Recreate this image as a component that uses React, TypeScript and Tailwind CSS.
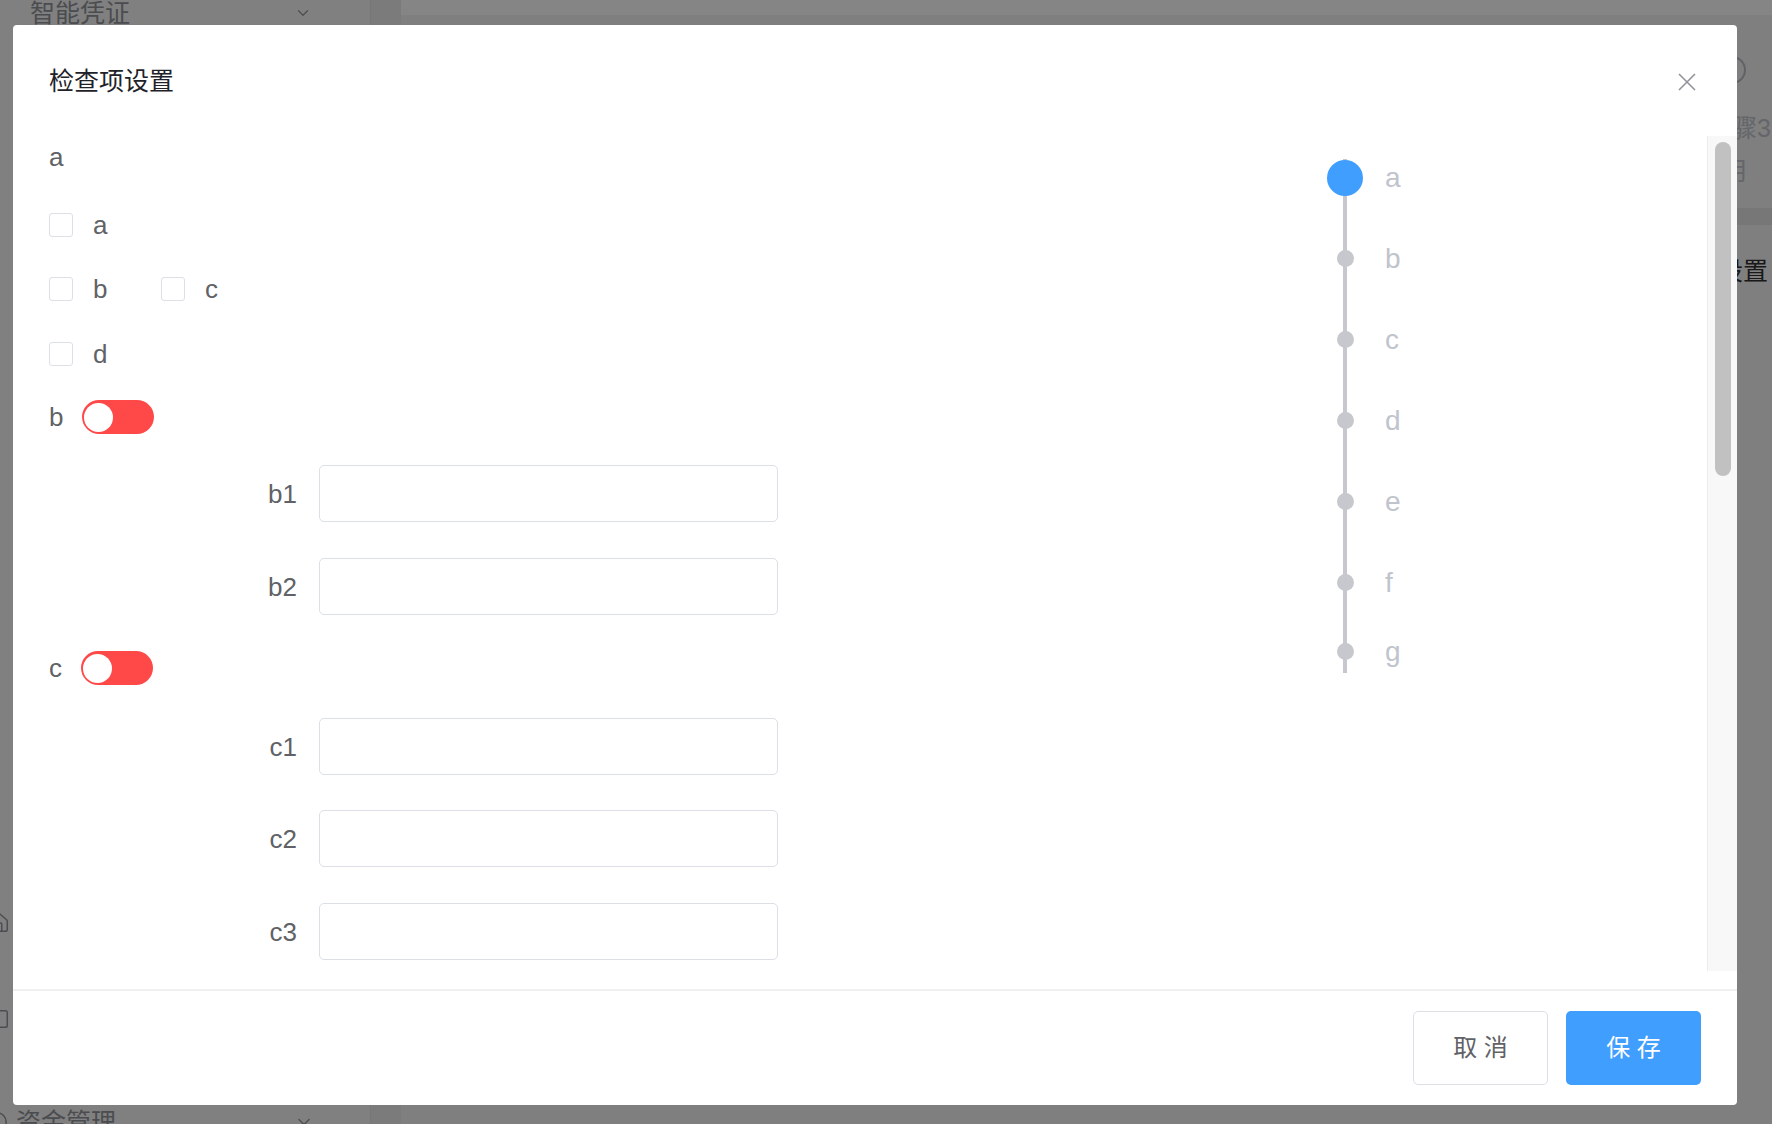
import { ChevronDown, Home, Square, Circle } from 'lucide-react';

const steps = ['a', 'b', 'c', 'd', 'e', 'f', 'g'];

function Check({ label, className = '' }: { label: string; className?: string }) {
    return (
        <label className={`flex items-center ${className}`}>
            <span className="h-[24px] w-[24px] rounded-[3px] border border-[#dcdfe6] bg-white" />
            <span className="ml-[20px] text-[26px] leading-none text-[#606266]">{label}</span>
        </label>
    );
}

function Toggle({ label, className = '' }: { label: string; className?: string }) {
    return (
        <div className={`flex h-[40px] shrink-0 items-center gap-[19px] ${className}`}>
            <span className="text-[26px] leading-none text-[#606266]">{label}</span>
            <span className="flex h-[34px] w-[72px] items-center rounded-full bg-[#ff4949] px-[2px]">
                <span className="h-[29px] w-[29px] rounded-full bg-white" />
            </span>
        </div>
    );
}

function Field({ label, className = '' }: { label: string; className?: string }) {
    return (
        <div className={`flex shrink-0 items-center ${className}`}>
            <span className="w-[270px] pr-[22px] text-right text-[26px] leading-none text-[#606266]">{label}</span>
            <input className="h-[57px] w-[459px] rounded-[5px] border border-[#dcdfe6] bg-white px-[15px] outline-none" />
        </div>
    );
}

export default function App() {
    return (
        <div className="relative h-[1124px] w-[1772px] overflow-hidden bg-[#f4f4f4] [font-family:'Liberation_Sans','Noto_Sans_CJK_SC',sans-serif]">
            {/* page behind the dialog */}
            <div className="flex h-full">
                <aside className="flex w-[371px] flex-col border-r border-[#e4e4e4] bg-[#f6f6f6] text-[#909399]">
                    <div className="-mt-[12px] flex h-[50px] shrink-0 items-center justify-between pl-[30px] pr-[58px]">
                        <span className="text-[25px] leading-none">智能凭证</span>
                        <ChevronDown size={18} strokeWidth={1.6} />
                    </div>
                    <div className="mt-[860px] flex h-[50px] shrink-0 items-center -ml-[12px]">
                        <Home size={22} strokeWidth={1.6} />
                    </div>
                    <div className="mt-[46px] flex h-[50px] shrink-0 items-center -ml-[12px]">
                        <Square size={22} strokeWidth={1.6} />
                    </div>
                    <div className="mt-[53px] flex h-[50px] shrink-0 items-center justify-between pr-[56px]">
                        <div className="flex items-center gap-[8px] -ml-[14px]">
                            <Circle size={22} strokeWidth={1.6} />
                            <span className="text-[25px] leading-none">资金管理</span>
                        </div>
                        <ChevronDown size={20} strokeWidth={1.6} />
                    </div>
                </aside>
                <div className="w-[30px] bg-[#ececec]" />
                <main className="flex flex-1 flex-col">
                    <div className="h-[15px] shrink-0 bg-white" />
                    <div className="flex flex-1 flex-col items-end bg-[#f3f3f3]">
                        <span className="mr-[26px] mt-[41px] h-[28px] w-[28px] shrink-0 rounded-full border-2 border-[#b8bcc4]" />
                        <span className="mr-[1px] mt-[31px] text-[25px] leading-[26px] text-[#c0c4cc]">步骤3</span>
                        <span className="mr-[26px] mt-[17px] text-[25px] leading-[26px] text-[#c0c4cc]">步骤说明</span>
                        <div className="mt-[24px] h-[17px] w-full shrink-0 bg-[#e4e4e4]" />
                        <span className="mr-[4px] mt-[33px] text-[25px] leading-[26px] text-[#303133]">检查项设置</span>
                    </div>
                </main>
            </div>

            <div className="absolute inset-0 bg-black/[0.48]" />

            {/* dialog */}
            <div className="absolute left-[13px] top-[25px] flex h-[1080px] w-[1724px] flex-col overflow-hidden rounded-[4px] bg-white">
                <div className="flex h-[111px] shrink-0 items-start justify-between pl-[36px] pr-[41px] pt-[40px]">
                    <h2 className="text-[25px] leading-[32px] text-[#1f2329]">检查项设置</h2>
                    <button className="flex h-[34px] items-center">
                        <svg width="18" height="18" viewBox="0 0 18 18" fill="none" stroke="#909399" strokeWidth="1.6">
                            <path d="M1 1L17 17M17 1L1 17" />
                        </svg>
                    </button>
                </div>

                <div className="flex h-[835px] shrink-0">
                    <div className="flex flex-1 flex-col overflow-hidden pl-[36px] pt-[1px]">
                        <div className="flex h-[40px] shrink-0 items-center text-[26px] leading-none text-[#606266]">a</div>
                        <div className="mt-[28px] flex h-[40px] shrink-0 items-center">
                            <Check label="a" />
                        </div>
                        <div className="mt-[24px] flex h-[40px] shrink-0 items-center">
                            <Check label="b" className="w-[112px]" />
                            <Check label="c" />
                        </div>
                        <div className="mt-[25px] flex h-[40px] shrink-0 items-center">
                            <Check label="d" />
                        </div>
                        <Toggle label="b" className="mt-[23px]" />
                        <Field label="b1" className="mt-[28px]" />
                        <Field label="b2" className="mt-[36px]" />
                        <Toggle label="c" className="mt-[33px]" />
                        <Field label="c1" className="mt-[30px]" />
                        <Field label="c2" className="mt-[35px]" />
                        <Field label="c3" className="mt-[36px]" />
                    </div>

                    <div className="relative w-[380px] shrink-0 pt-[1px]">
                        <div className="absolute left-[16px] top-[23px] h-[514px] w-[4px] bg-[#c6c8cd]" />
                        {steps.map((s, i) => (
                            <div key={s} className={`relative flex items-center ${i === 6 ? 'h-[57px]' : 'h-[81px]'}`}>
                                <div className="flex w-[36px] justify-center">
                                    {i === 0 ? (
                                        <span className="h-[36px] w-[36px] rounded-full bg-[#409eff]" />
                                    ) : (
                                        <span className="h-[17px] w-[17px] rounded-full bg-[#c6c8cd]" />
                                    )}
                                </div>
                                <span className="ml-[22px] text-[28px] leading-none text-[#c0c4cc]">{s}</span>
                            </div>
                        ))}
                    </div>

                    <div className="w-[30px] shrink-0 border-l border-[#ececec] bg-[#f8f8f8] pl-[7px] pt-[6px]">
                        <div className="h-[334px] w-[16px] rounded-full bg-[#c1c1c1]" />
                    </div>
                </div>

                <div className="h-[18px] shrink-0" />

                <div className="flex shrink-0 justify-end gap-[18px] border-t-2 border-[#f0f0f0] pb-[20px] pr-[36px] pt-[20px]">
                    <button className="h-[74px] w-[135px] rounded-[5px] border border-[#dcdfe6] bg-white text-[24px] text-[#606266]">
                        取 消
                    </button>
                    <button className="h-[74px] w-[135px] rounded-[5px] bg-[#409eff] text-[24px] text-white">
                        保 存
                    </button>
                </div>
            </div>
        </div>
    );
}
